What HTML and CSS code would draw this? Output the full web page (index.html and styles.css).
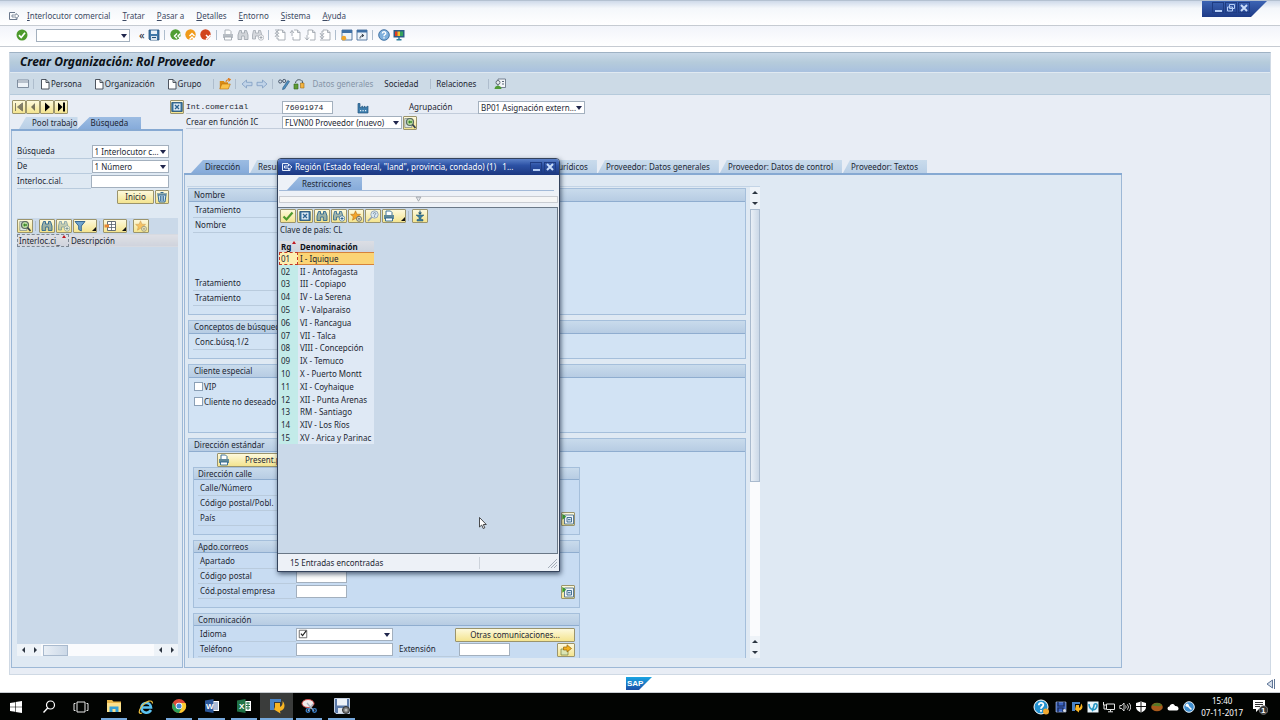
FILE: index.html
```html
<!DOCTYPE html>
<html lang="es">
<head>
  <meta charset="UTF-8">
  <title>Crear Organización: Rol Proveedor</title>
  <link rel="stylesheet" href="styles.css">
</head>
<body>
  <svg class="sprite" aria-hidden="true">
    <symbol id="i-ok" viewBox="0 0 12 12"><circle cx="6" cy="6" r="5.5" fill="#4d9a2c"/><path d="M3 6.2l2.2 2.3L9 3.8" fill="none" stroke="#fff" stroke-width="1.7"/></symbol>
    <symbol id="i-menu" viewBox="0 0 12 12"><path d="M7 2.5H1.5v7H9V7.5" fill="none" stroke="#6a788c"/><path d="M4 5h4V3.500L11 6 8 8.500V7H4z" fill="#fff" stroke="#6a788c" stroke-width=".8"/></symbol>
    <symbol id="i-save" viewBox="0 0 12 12"><path d="M1 1h10v10H2l-1-1z" fill="#3f78a8" stroke="#23527c" stroke-width=".8"/><path d="M3 1.500h6V5H3z" fill="#e8f1f8"/><path d="M3 7h6v4H3z" fill="#dbe6ee"/><path d="M4 8.500h4" stroke="#23527c"/></symbol>
    <symbol id="i-back" viewBox="0 0 12 12"><circle cx="5.500" cy="5.500" r="5.200" fill="#4f9e32"/><path d="M7 4.500L4.500 7 7 9.500M10.500 4.500L8 7l2.500 2.500" fill="none" stroke="#fff" stroke-width="1.400"/></symbol>
    <symbol id="i-exit" viewBox="0 0 12 12"><circle cx="5.500" cy="5.500" r="5.200" fill="#f09a1a"/><path d="M4.500 7L7 4.500 9.500 7M4.500 10.500L7 8l2.500 2.500" fill="none" stroke="#fff" stroke-width="1.400"/></symbol>
    <symbol id="i-cancel" viewBox="0 0 12 12"><circle cx="5.500" cy="5.500" r="5.200" fill="#d2451e"/><path d="M6 6l4.500 4.500M10.500 6L6 10.500" stroke="#fff" stroke-width="1.500"/></symbol>
    <symbol id="i-print" viewBox="0 0 12 12"><path d="M3 5V1h4.500L9 2.500V5" fill="#fff" stroke="currentColor" stroke-width=".9"/><path d="M1 5h10v4H1z" fill="currentColor" opacity=".75"/><path d="M2.500 8h7v3h-7z" fill="#fff" stroke="currentColor" stroke-width=".9"/></symbol>
    <symbol id="i-find" viewBox="0 0 12 12"><path d="M2.500 1.500h2V4H7.500V1.500h2L11 6v4.500H7.300V7H4.700v3.500H1V6z" fill="currentColor" fill-opacity=".45" stroke="currentColor" stroke-width=".9"/></symbol>
    <symbol id="i-findnext" viewBox="0 0 12 12"><path d="M1.500 1.500h2V4h3V1.500h2L9.500 5v4H6.500V7H3.500v3H.5V6z" fill="currentColor" fill-opacity=".4" stroke="currentColor" stroke-width=".8"/><circle cx="9" cy="8.500" r="2.700" fill="#fff" stroke="currentColor" stroke-width=".7"/><path d="M9 7v3M7.500 8.500h3" stroke="currentColor"/></symbol>
    <symbol id="i-first" viewBox="0 0 12 12"><path d="M4 2V1h4.500L11 3.500V11H4V9" fill="#fff" stroke="currentColor" stroke-width=".9"/><path d="M8.500 1v2.500H11M1 1h4M3 2v8M1 5l2-3 2 3M1 8l2-3 2 3" fill="none" stroke="currentColor" stroke-width=".9"/></symbol>
    <symbol id="i-prev" viewBox="0 0 12 12"><path d="M5 1h3.500L11 3.500V11H4V8" fill="#fff" stroke="currentColor" stroke-width=".9"/><path d="M8.500 1v2.500H11M3 7V1.500M1 4l2-2.500L5 4" fill="none" stroke="currentColor" stroke-width=".9"/></symbol>
    <symbol id="i-next" viewBox="0 0 12 12"><path d="M4 6V1h4.500L11 3.500V11H6" fill="#fff" stroke="currentColor" stroke-width=".9"/><path d="M8.500 1v2.500H11M3 6v5M1 8.500L3 11l2-2.500" fill="none" stroke="currentColor" stroke-width=".9"/></symbol>
    <symbol id="i-end" viewBox="0 0 12 12"><path d="M4 3V1h4.500L11 3.500V11H5" fill="#fff" stroke="currentColor" stroke-width=".9"/><path d="M8.500 1v2.500H11M1 11h4M3 2v8M1 4l2 3 2-3M1 7l2 3 2-3" fill="none" stroke="currentColor" stroke-width=".9"/></symbol>
    <symbol id="i-doc" viewBox="0 0 12 12"><path d="M2.500 1.500h4.500l3 3V11h-7.500z" fill="#fff" stroke="#3c444e" stroke-width=".9"/><path d="M7 1.500v3h3" fill="none" stroke="#3c444e" stroke-width=".9"/></symbol>
    <symbol id="i-session" viewBox="0 0 12 12"><path d="M1 1h10v10H1z" fill="#eef4fa" stroke="#4a6f9b" stroke-width=".9"/><path d="M1 1h10v3H1z" fill="#3f70a5"/><circle cx="2.800" cy="9.200" r="2.400" fill="#f0a52a"/></symbol>
    <symbol id="i-shortcut" viewBox="0 0 12 12"><path d="M1 1h10v10H1z" fill="#eef4fa" stroke="#4a6f9b" stroke-width=".9"/><path d="M1 1h10v2.500H1z" fill="#3f70a5"/><path d="M4 9.500c0-2 1-3 3.500-3M5.800 5l2 1.500-2 1.500" fill="none" stroke="#27333f" stroke-width=".9"/></symbol>
    <symbol id="i-help" viewBox="0 0 12 12"><circle cx="6" cy="6" r="5.300" fill="#7fb0dc" stroke="#36699d" stroke-width=".9"/><path d="M4.300 4.600c0-2.400 3.500-2.300 3.400-.2C7.700 5.600 6 5.600 6 7.200M6 8.300v1.300" fill="none" stroke="#fff" stroke-width="1.400"/></symbol>
    <symbol id="i-monitor" viewBox="0 0 12 12"><path d="M.5 1h11v7.500H.5z" fill="#2c5c86"/><path d="M2 2.500h2.500v4.500H2z" fill="#e03c22"/><path d="M4.500 2.500H7v4.500H4.500z" fill="#f5c32c"/><path d="M7 2.500h3v4.500H7z" fill="#34a35c"/><path d="M6 8v2M3.500 10.800h5" stroke="#2f7f9c" stroke-width="1.500"/></symbol>
    <symbol id="i-window" viewBox="0 0 12 12"><path d="M.5 2h11v7.500H.5z" fill="#eef3f8" stroke="#68778a" stroke-width=".8"/><path d="M1 4h10" stroke="#68778a" stroke-width=".8"/></symbol>
    <symbol id="i-folder" viewBox="0 0 12 12"><path d="M.8 3h4l1 1.200H9V11H.8z" fill="#d98a14"/><path d="M.8 11l2-5h8.500l-2 5z" fill="#fac24a" stroke="#b96c0c" stroke-width=".6"/><path d="M7 4c0-2 2-2.500 4-2.500M9 .3L11.300 1.500 9.500 3.500" fill="none" stroke="#e07b18" stroke-width="1.100"/></symbol>
    <symbol id="i-left" viewBox="0 0 12 12"><path d="M1 6l4.500-4v2.300H11v3.400H5.500V10z" fill="#c0d3e8" stroke="#7f9dc2" stroke-width=".8"/></symbol>
    <symbol id="i-right" viewBox="0 0 12 12"><path d="M11 6L6.500 2v2.300H1v3.400h5.500V10z" fill="#c0d3e8" stroke="#7f9dc2" stroke-width=".8"/></symbol>
    <symbol id="i-glasses" viewBox="0 0 12 12"><circle cx="2.200" cy="3.500" r="1.600" fill="none" stroke="#3d4c60" stroke-width=".9"/><circle cx="6.200" cy="3" r="1.600" fill="none" stroke="#3d4c60" stroke-width=".9"/><path d="M11.500 3.500L6.500 11l-2 .5.500-2L9.800 2.500z" fill="#4d8fc0" stroke="#28547c" stroke-width=".6"/></symbol>
    <symbol id="i-transport" viewBox="0 0 12 12"><path d="M1 6h4v5H1z" fill="#5d9b35" stroke="#33671a" stroke-width=".6"/><path d="M7.500 5h3.500v5H7.500z" fill="#f3b440" stroke="#a66c10" stroke-width=".6"/><path d="M2.500 5C3 1.500 6 1 8.500 2.500M9.500 5L9.200 2.500" fill="none" stroke="#39474f" stroke-width=".9"/></symbol>
    <symbol id="i-person" viewBox="0 0 12 12"><path d="M4 1h7.500v8.500H4z" fill="#f3f6f9" stroke="#5b6878" stroke-width=".8"/><circle cx="4" cy="4.500" r="2" fill="#e9edf0" stroke="#47525e" stroke-width=".8"/><path d="M.5 11c0-4.500 7-4.500 7 0z" fill="#4f9a36"/><path d="M8 3.500h2M8 6h2" stroke="#5b6878"/></symbol>
    <symbol id="i-xbox" viewBox="0 0 12 12"><path d="M.8 1.500h10.400v9H.8z" fill="#3c78a4" stroke="#1e4e78" stroke-width=".8"/><path d="M2.500 2.500h7v7h-7z" fill="#dfeaf3"/><path d="M4 4l4 4M8 4L4 8" stroke="#2c6491" stroke-width="1.300"/></symbol>
    <symbol id="i-factory" viewBox="0 0 12 12"><path d="M1 11V1.500h2V6l2.500-2v2L8 4v2l3-2v7z" fill="#3f7fae" stroke="#205580" stroke-width=".7"/><path d="M3 8h1.200v1.200H3zM5.500 8h1.200v1.200H5.500zM8 8h1.200v1.200H8z" fill="#e3eff8"/></symbol>
    <symbol id="i-search" viewBox="0 0 12 12"><path d="M.8 1.500h7v9h-7z" fill="#dfe7e2" stroke="#7b8682" stroke-width=".7"/><circle cx="6" cy="5" r="3.500" fill="#b8d99f" stroke="#5a6a62" stroke-width="1.200"/><path d="M8.500 7.500l3 3.500" stroke="#34424c" stroke-width="1.800"/><path d="M4 5l2-1.700v1h2v1.400H6v1z" fill="#3c8a2a"/></symbol>
    <symbol id="i-trash" viewBox="0 0 12 12"><path d="M2 4h8l-1 7H3z" fill="#cfe2f0" stroke="#2f6791"/><path d="M1 3h10M4.500 1.500h3M4.800 5v5M7.200 5v5" stroke="#2f6791" stroke-width="1.200"/></symbol>
    <symbol id="i-filter" viewBox="0 0 12 12"><path d="M1 1.500h10L7.300 6v5L4.700 9.500V6z" fill="#6fa3cc" stroke="#2a5f8d" stroke-width=".9"/></symbol>
    <symbol id="i-grid" viewBox="0 0 12 12"><path d="M3.500 1.500h8v9h-8z" fill="#fff" stroke="#55616c" stroke-width=".9"/><path d="M3.500 4.500h8M3.500 7.500h8M7.500 1.500v9" stroke="#55616c" stroke-width=".8"/><path d="M.5 4.500H5V7.500H.5z" fill="#e78934"/></symbol>
    <symbol id="i-star" viewBox="0 0 12 12"><path d="M5.500.8l1.400 3.400 3.600.2-2.800 2.300.9 3.500-3.100-1.900-3 1.900.8-3.500L.6 4.400l3.600-.2z" fill="#f4a52a" stroke="#b96f10" stroke-width=".6"/><circle cx="9" cy="8.800" r="2.500" fill="#f6f0d0" stroke="#4c565e" stroke-width=".8"/><path d="M9 7.500v2.600M7.700 8.800h2.600" stroke="#4c565e" stroke-width=".7"/></symbol>
    <symbol id="i-check" viewBox="0 0 12 12"><path d="M1.500 6.500L4.500 9.500l6-7" fill="none" stroke="#4f9a2e" stroke-width="2.200"/></symbol>
    <symbol id="i-what" viewBox="0 0 12 12"><circle cx="7.500" cy="4.500" r="3.700" fill="#d8e6f0" stroke="#8a9cad" stroke-width=".8"/><path d="M4.800 7.200L1 11" stroke="#8a9cad" stroke-width="1.600"/><path d="M6.300 3.800c0-1.700 2.500-1.600 2.400-.1-.1.800-1.200.8-1.200 1.900M7.500 6.200v1" fill="none" stroke="#6d8296" stroke-width=".9"/></symbol>
    <symbol id="i-pin" viewBox="0 0 12 12"><path d="M2 5h8L7 7.500v2H9v1.500H3V9.500h2v-2z" fill="#3c7f9f" stroke="#1f526f" stroke-width=".5"/><path d="M4 2.500h4L6 5z" fill="#1f526f"/><path d="M6 .5v3" stroke="#1f526f"/></symbol>
    <symbol id="i-detail" viewBox="0 0 12 12"><path d="M2.500 2h9v9h-9z" fill="#f2f6fa" stroke="#4a6f8e" stroke-width=".9"/><path d="M5 4.500h4.500v4.500H5z" fill="#dbe8f3" stroke="#36648b" stroke-width=".9"/><path d="M6 6.700h2.500" stroke="#36648b"/><path d="M.3.800l4 3-4 3z" fill="#3d9a2e"/></symbol>
    <symbol id="i-more" viewBox="0 0 12 12"><path d="M1 5h7v6H1z" fill="#dbe5b4" stroke="#73803f" stroke-width=".7"/><path d="M3.500 3H7V.8L11.500 4.500 7 8V6H3.500z" fill="#f0b020" stroke="#96650c" stroke-width=".7"/></symbol>
    <symbol id="i-req" viewBox="0 0 12 12"><path d="M1.500 1.500h9v9h-9z" fill="#fff" stroke="#555"/><path d="M3.500 5.500l2 2.500L10 2" fill="none" stroke="#222" stroke-width="1.400"/></symbol>
  </svg>

  <nav class="menubar">
    <svg class="ico"><use href="#i-menu"/></svg>
    <a href="#"><u>I</u>nterlocutor comercial</a>
    <a href="#"><u>T</u>ratar</a>
    <a href="#"><u>P</u>asar a</a>
    <a href="#"><u>D</u>etalles</a>
    <a href="#"><u>E</u>ntorno</a>
    <a href="#"><u>S</u>istema</a>
    <a href="#"><u>A</u>yuda</a>
  </nav>

  <div class="toolbar">
    <button class="tool" aria-label="Continuar"><svg class="ico"><use href="#i-ok"/></svg></button>
    <span class="combo command"><select aria-label="Comando"><option></option></select></span>
    <span class="chevrons">«</span>
    <button class="tool" aria-label="Grabar"><svg class="ico"><use href="#i-save"/></svg></button>
    <i class="sep"></i>
    <button class="tool" aria-label="Atrás"><svg class="ico"><use href="#i-back"/></svg></button>
    <button class="tool" aria-label="Finalizar"><svg class="ico"><use href="#i-exit"/></svg></button>
    <button class="tool" aria-label="Cancelar"><svg class="ico"><use href="#i-cancel"/></svg></button>
    <i class="sep"></i>
    <button class="tool off" aria-label="Imprimir"><svg class="ico"><use href="#i-print"/></svg></button>
    <button class="tool off" aria-label="Buscar"><svg class="ico"><use href="#i-find"/></svg></button>
    <button class="tool off" aria-label="Continuar búsqueda"><svg class="ico"><use href="#i-findnext"/></svg></button>
    <i class="sep"></i>
    <button class="tool off" aria-label="Primera página"><svg class="ico"><use href="#i-first"/></svg></button>
    <button class="tool off" aria-label="Página anterior"><svg class="ico"><use href="#i-prev"/></svg></button>
    <button class="tool off" aria-label="Página siguiente"><svg class="ico"><use href="#i-next"/></svg></button>
    <button class="tool off" aria-label="Última página"><svg class="ico"><use href="#i-end"/></svg></button>
    <i class="sep"></i>
    <button class="tool" aria-label="Crear modo"><svg class="ico"><use href="#i-session"/></svg></button>
    <button class="tool" aria-label="Crear enlace"><svg class="ico"><use href="#i-shortcut"/></svg></button>
    <i class="sep"></i>
    <button class="tool" aria-label="Ayuda"><svg class="ico"><use href="#i-help"/></svg></button>
    <button class="tool" aria-label="Ajustar layout"><svg class="ico"><use href="#i-monitor"/></svg></button>
  </div>

  <main class="screen">
    <h1>Crear Organización: Rol Proveedor</h1>
    <div class="appbar">
      <button class="tool" aria-label="Cabecera"><svg class="ico"><use href="#i-window"/></svg></button>
      <i class="sep"></i>
      <button class="act"><svg class="ico"><use href="#i-doc"/></svg>Persona</button>
      <button class="act"><svg class="ico"><use href="#i-doc"/></svg>Organización</button>
      <button class="act"><svg class="ico"><use href="#i-doc"/></svg>Grupo</button>
      <i class="sep"></i>
      <button class="tool" aria-label="Abrir"><svg class="ico"><use href="#i-folder"/></svg></button>
      <i class="sep"></i>
      <button class="tool" aria-label="Anterior"><svg class="ico"><use href="#i-left"/></svg></button>
      <button class="tool" aria-label="Siguiente"><svg class="ico"><use href="#i-right"/></svg></button>
      <i class="sep"></i>
      <button class="tool" aria-label="Visualizar"><svg class="ico"><use href="#i-glasses"/></svg></button>
      <button class="tool" aria-label="Verificar"><svg class="ico"><use href="#i-transport"/></svg></button>
      <button class="act" disabled>Datos generales</button>
      <button class="act">Sociedad</button>
      <i class="sep"></i>
      <button class="act">Relaciones</button>
      <i class="sep"></i>
      <button class="tool" aria-label="Interlocutor"><svg class="ico"><use href="#i-person"/></svg></button>
    </div>

    <div class="content">
      <section class="locator">
        <div class="nav-row">
          <button class="btn sq off" aria-label="Primero"><svg class="ico"><path d="M2.500 2v8M9.500 2v8L4.500 6z" fill="#333" stroke="#333"/></svg></button>
          <button class="btn sq off" aria-label="Anterior"><svg class="ico"><path d="M8 2v8L4 6z" fill="#222"/></svg></button>
          <button class="btn sq" aria-label="Siguiente"><svg class="ico"><path d="M4 1.500v9L9 6z"/></svg></button>
          <button class="btn sq" aria-label="Último"><svg class="ico"><path d="M3 1.500v9L7.500 6zM8 1.500h2v9H8z"/></svg></button>
          <button class="btn sq last" aria-label="Cerrar localizador"><svg class="ico"><use href="#i-xbox"/></svg></button>
        </div>
        <div class="tabs">
          <a class="tab" href="#">Pool trabajo</a>
          <a class="tab active" href="#">Búsqueda</a>
        </div>
        <div class="pane">
          <form class="search">
            <div class="row">
              <label for="buscar">Búsqueda</label>
              <span class="combo"><select id="buscar"><option>1 Interlocutor c...</option></select></span>
            </div>
            <div class="row">
              <label for="de">De</label>
              <span class="combo"><select id="de"><option>1 Número</option></select></span>
            </div>
            <div class="row">
              <label for="interloc">Interloc.cial.</label>
              <input type="text" id="interloc">
            </div>
            <div class="row end">
              <button class="btn start" type="button">Inicio</button>
              <button class="btn sq" type="button" aria-label="Borrar"><svg class="ico"><use href="#i-trash"/></svg></button>
            </div>
          </form>
          <div class="results">
            <div class="results-bar">
              <button class="btn" aria-label="Detalle"><svg class="ico"><use href="#i-search"/></svg></button>
              <i class="sep"></i>
              <button class="btn blue" aria-label="Buscar"><svg class="ico"><use href="#i-find"/></svg></button>
              <button class="btn off blue" aria-label="Continuar búsqueda"><svg class="ico"><use href="#i-findnext"/></svg></button>
              <button class="btn drop" aria-label="Filtro"><svg class="ico"><use href="#i-filter"/></svg></button>
              <i class="sep"></i>
              <button class="btn drop" aria-label="Layout"><svg class="ico"><use href="#i-grid"/></svg></button>
              <i class="sep"></i>
              <button class="btn off" aria-label="Favoritos"><svg class="ico"><use href="#i-star"/></svg></button>
            </div>
            <table class="results-table">
              <thead><tr><th class="sorted">Interloc.ci_</th><th>Descripción</th></tr></thead>
            </table>
            <div class="hscroll">
              <b class="ar l"></b><b class="ar r"></b><span class="thumb"></span><b class="ar l"></b><b class="ar r"></b>
            </div>
          </div>
        </div>
      </section>

      <section class="detail">
        <div class="head-row">
          <label class="mono" for="ic">Int.comercial</label>
          <input class="mono" type="text" id="ic" value="76091974">
          <svg class="ico factory"><use href="#i-factory"/></svg>
          <label for="agr" class="agr">Agrupación</label>
          <span class="combo agr-sel"><select id="agr"><option>BP01 Asignación extern...</option></select></span>
        </div>
        <div class="head-row">
          <label for="rol">Crear en función IC</label>
          <span class="combo rol-sel"><select id="rol"><option>FLVN00 Proveedor (nuevo)</option></select></span>
          <button class="btn sq" aria-label="Detalle función"><svg class="ico"><use href="#i-search"/></svg></button>
        </div>
        <div class="tabs">
          <a class="tab active" href="#">Dirección</a>
          <a class="tab summary" href="#">Resumen</a>
          <a class="tab" href="#">Datos jurídicos</a>
          <a class="tab" href="#">Proveedor: Datos generales</a>
          <a class="tab" href="#">Proveedor: Datos de control</a>
          <a class="tab" href="#">Proveedor: Textos</a>
        </div>
        <div class="pane">
          <div class="scroller">
            <form class="groups">
              <fieldset>
                <legend>Nombre</legend>
                <div class="row"><span>Tratamiento</span></div>
                <div class="row"><span>Nombre</span></div>
                <div class="blank"></div>
                <div class="row"><span>Tratamiento</span></div>
                <div class="row"><span>Tratamiento</span></div>
              </fieldset>
              <fieldset>
                <legend>Conceptos de búsqueda</legend>
                <div class="row"><span>Conc.búsq.1/2</span></div>
              </fieldset>
              <fieldset class="special">
                <legend>Cliente especial</legend>
                <label class="check"><input type="checkbox">VIP</label>
                <label class="check"><input type="checkbox">Cliente no deseado</label>
              </fieldset>
              <fieldset class="address">
                <legend>Dirección estándar</legend>
                <button class="btn preview" type="button"><svg class="ico blue"><use href="#i-print"/></svg>Present.prel.</button>
                <fieldset class="sub">
                  <legend>Dirección calle</legend>
                  <div class="row"><span>Calle/Número</span></div>
                  <div class="row"><span>Código postal/Pobl.</span></div>
                  <div class="row"><span>País</span><button class="btn sq last" type="button" aria-label="Más campos"><svg class="ico"><use href="#i-detail"/></svg></button></div>
                </fieldset>
                <fieldset class="sub">
                  <legend>Apdo.correos</legend>
                  <div class="row"><label for="apdo">Apartado</label><input type="text" id="apdo" class="short"></div>
                  <div class="row"><label for="cp">Código postal</label><input type="text" id="cp" class="short"></div>
                  <div class="row"><label for="cpe">Cód.postal empresa</label><input type="text" id="cpe" class="short"><button class="btn sq last" type="button" aria-label="Más campos"><svg class="ico"><use href="#i-detail"/></svg></button></div>
                </fieldset>
                <fieldset class="sub">
                  <legend>Comunicación</legend>
                  <div class="row">
                    <label for="idioma">Idioma</label>
                    <span class="combo required"><select id="idioma"><option></option></select><svg class="ico"><use href="#i-req"/></svg></span>
                    <button class="btn other last" type="button">Otras comunicaciones...</button>
                  </div>
                  <div class="row">
                    <label for="tel">Teléfono</label><input type="text" id="tel" class="long">
                    <label for="ext" class="ext">Extensión</label><input type="text" id="ext" class="short">
                    <button class="btn more last" type="button" aria-label="Más teléfonos"><svg class="ico"><use href="#i-more"/></svg></button>
                  </div>
                </fieldset>
              </fieldset>
            </form>
            <div class="vscroll">
              <b class="ar u"></b><b class="ar d"></b><span class="thumb"></span><b class="ar u"></b><b class="ar d"></b>
            </div>
          </div>
        </div>
      </section>
    </div>
  </main>

  <footer class="statusbar">
    <svg class="sap" viewBox="0 0 26 13" role="img" aria-label="SAP">
      <defs><linearGradient id="g-sap" x2="0" y2="1"><stop stop-color="#19a4e2"/><stop offset="1" stop-color="#1a4fa8"/></linearGradient></defs>
      <path d="M0 0h26L13 13H0z" fill="url(#g-sap)"/>
      <text x="1" y="9">SAP</text>
    </svg>
    <svg class="ico expand"><path d="M9.500 2v8L4 6zM11.500 1v10" fill="#d5deea" stroke="#5e7596"/></svg>
  </footer>

  <footer class="taskbar">
    <div class="apps">
      <a href="#" aria-label="Inicio"><svg viewBox="0 0 16 16"><path d="M2 4l5-.8v4.500H2zM7.600 3.100L14 2v5.700H7.600zM2 8.300h5v4.500L2 12zM7.600 8.300H14V14l-6.400-1z" fill="#fff"/></svg></a>
      <a href="#" aria-label="Buscar"><svg viewBox="0 0 16 16"><circle cx="9.500" cy="6" r="4" fill="none" stroke="#fff" stroke-width="1.200"/><path d="M6.700 9L2.500 13.500" stroke="#fff" stroke-width="1.400"/></svg></a>
      <a href="#" aria-label="Vista de tareas"><svg viewBox="0 0 16 16"><path d="M4 3h8v10H4zM2.500 4.500h-1.500v7h1.500M13.500 4.500H15v7h-1.500" fill="none" stroke="#e8e8e8"/></svg></a>
      <a href="#" class="run" aria-label="Explorador"><svg viewBox="0 0 16 16"><path d="M1 2h5l1.500 1.500H15V14H1z" fill="#e9b84c"/><path d="M1 5h14v9H1z" fill="#fbe08c"/><path d="M3.500 14V8.500h9V14h-3v-3h-3v3z" fill="#35a0d8"/></svg></a>
      <a href="#" aria-label="Internet Explorer"><svg viewBox="0 0 16 16"><path d="M13 11c-3 4.500-9.500 3-9.500-2.500S12.500 2 13 8.500H4" fill="none" stroke="#5cc4f2" stroke-width="2.600"/><path d="M14.500 4.500C14.500 0 8 2 4 7c-4 4.800-3.500 8.500 0 7" fill="none" stroke="#f2c440" stroke-width="1.200"/></svg></a>
      <a href="#" class="run" aria-label="Chrome"><svg viewBox="0 0 16 16"><circle cx="8" cy="8" r="7" fill="#dd4b39"/><path d="M2 4.500A7 7 0 0 0 8 15l3-5.500H5z" fill="#2da25a"/><path d="M8 15A7 7 0 0 0 14.500 5H8l3 4.500z" fill="#fbcb2e"/><circle cx="8" cy="8" r="3.300" fill="#fff"/><circle cx="8" cy="8" r="2.500" fill="#4285d6"/></svg></a>
      <a href="#" class="run" aria-label="Word"><svg viewBox="0 0 16 16"><path d="M8 3h7v10H8z" fill="#fff"/><path d="M10 5h4M10 7h4M10 9h4M10 11h4" stroke="#2b579a" stroke-width=".8"/><path d="M1 2.500L9.500 1v14L1 13.500z" fill="#2b579a"/><text x="2" y="11">W</text></svg></a>
      <a href="#" class="run" aria-label="Excel"><svg viewBox="0 0 16 16"><path d="M8 3h7v10H8z" fill="#fff"/><path d="M10 5h4M10 7.500h4M10 10h4M12 4v8" stroke="#217346"/><path d="M1 2.500L9.500 1v14L1 13.500z" fill="#217346"/><text x="3" y="11">X</text></svg></a>
      <a href="#" class="run current" aria-label="SAP Logon"><svg viewBox="0 0 16 16"><path d="M1 1h11v3H5v8H1z" fill="#4a83c4"/><path d="M6 5h5v4c2-1 3-3 2.500-6C16.500 6 16.500 12 11 13l.5 2.500L5 11.500 6 9z" fill="#f9b522"/></svg></a>
      <a href="#" class="run" aria-label="Recortes"><svg viewBox="0 0 16 16"><ellipse cx="7" cy="5.500" rx="6" ry="4" fill="#f0eaea" stroke="#d34a4a"/><path d="M6 5l7 8M12 6l-5 7" stroke="#a8b4c0" stroke-width="1.300"/><circle cx="7" cy="12.500" r="1.800" fill="none" stroke="#3b7fc8" stroke-width="1.300"/><circle cx="13.500" cy="12.500" r="1.800" fill="none" stroke="#3b7fc8" stroke-width="1.300"/></svg></a>
      <a href="#" class="run" aria-label="Grabadora"><svg viewBox="0 0 16 16"><path d="M.5.500h15v15H2l-1.500-1.500z" fill="#5b79a8" stroke="#c3cfe0"/><path d="M3 1h10v6.500H3z" fill="#eef2f8"/><path d="M4 10h6v5H4z" fill="#dfe5ee"/><circle cx="12" cy="12" r="3.500" fill="#777" stroke="#333"/><circle cx="12" cy="12" r="1.500" fill="#bbb"/></svg></a>
    </div>
    <div class="tray">
      <svg class="big" viewBox="0 0 16 16"><circle cx="8" cy="8" r="7" fill="#2391cf" stroke="#fff"/><path d="M5.800 6.200c0-3.200 4.700-3 4.500-.2C10.200 7.800 8 7.700 8 9.800M8 11v1.800" fill="none" stroke="#fff" stroke-width="1.800"/><circle cx="13" cy="12.500" r="3" fill="#f0a830"/></svg>
      <svg viewBox="0 0 12 12"><path d="M1 1h10v10H1z" fill="#3a62c0" stroke="#a7b7d8" stroke-width=".7"/><path d="M3 1v4h6V1M3 11V7h5v4" fill="none" stroke="#16264f" stroke-width="1.200"/><circle cx="9.500" cy="9.500" r="1.500" fill="#ddd"/></svg>
      <svg viewBox="0 0 12 12"><path d="M1 1h8v2H4v7H1z" fill="#4a83c4"/><path d="M5 4h3v3c1.500-1 2-2 2-4.500 3 3 1 7-2 7v2L4 8.500z" fill="#f9b522"/></svg>
      <svg viewBox="0 0 12 12"><path d="M.5.500h11v11H.5z" fill="#e9f5fb"/><path d="M2 3c0 6 7 8 8 2 .5-3-3-3-3-.5S4 9 6 10" fill="none" stroke="#2596c4" stroke-width="1.600"/></svg>
      <svg viewBox="0 0 12 12"><path d="M3.500 3h8v5.500h-8zM7.500 8.500v2M5 10.800h5M.5 1v3h3M1 4v4h2" fill="none" stroke="#e8e8e8"/></svg>
      <svg viewBox="0 0 12 12"><path d="M.8 4.500h2L5 2v8L2.800 7.500h-2zM6.500 4.500q1.500 1.500 0 3M8.300 3.300q2.500 2.700 0 5.400M10 2q3.500 4 0 8" fill="none" stroke="#e8e8e8" stroke-width=".9"/></svg>
      <svg viewBox="0 0 12 12"><path d="M6 .5L11 2v4c0 3-2.500 4.500-5 5.500C3.500 10.500 1 9 1 6V2z" fill="#fff"/><path d="M6 1v10M1 5.500h10" stroke="#111"/></svg>
      <svg viewBox="0 0 12 12"><ellipse cx="6" cy="6" rx="5.800" ry="4.300" fill="#a85a1c"/><path d="M.5 5C3 1.500 8 1 11 4 8 7 4 4 .5 5z" fill="#557a28"/></svg>
      <svg viewBox="0 0 12 12"><path d="M2.500 9.500a2 2 0 0 1 0-4C3 2.500 7 2 8 5c4-.5 4.500 4 2 4.500z" fill="#fff"/></svg>
      <svg viewBox="0 0 12 12"><circle cx="6" cy="6" r="5.300" fill="#3f8fd0" stroke="#e8f2fa"/><path d="M4 4l4.500 4.500" stroke="#fff" stroke-width="1.500"/><circle cx="4.200" cy="4.200" r="1.600" fill="#fff"/></svg>
      <time>15:40<br>07-11-2017</time>
      <svg class="big note" viewBox="0 0 16 16"><path d="M1 1h12v9H7l-3 3v-3H1z" fill="#fff"/><path d="M3 3.500h8M3 5.500h8M3 7.500h5" stroke="#333"/><circle cx="11.500" cy="11" r="4.300" fill="#333" stroke="#999" stroke-width=".7"/><text x="9" y="14">1</text></svg>
    </div>
  </footer>

  <div class="win-controls">
    <button aria-label="Minimizar"><svg class="ico"><path d="M3 9h7" stroke="#b5cdf5" stroke-width="2"/></svg></button>
    <button aria-label="Restaurar"><svg class="ico"><path d="M4.500 2.500h5v4h-5zM2.500 5h5v4h-5z" fill="#2c4f9c" stroke="#b5cdf5"/></svg></button>
    <button aria-label="Cerrar"><svg class="ico"><path d="M3 3l6 6M9 3L3 9" stroke="#c8dbf8" stroke-width="2"/></svg></button>
  </div>

  <div class="dialog" role="dialog" aria-labelledby="dlg-title">
    <header>
      <svg class="ico" viewBox="0 0 12 12"><path d="M7 2.500H1.500v7H9V8M3.500 5h4V3l3.500 3-3.500 2.500V7h-4z" fill="none" stroke="#e6eefb"/></svg>
      <h2 id="dlg-title">Región (Estado federal, "land", provincia, condado) (1) &nbsp; 1...</h2>
      <button aria-label="Minimizar"><svg class="ico"><path d="M3 9h7" stroke="#b5cdf5" stroke-width="2"/></svg></button>
      <button aria-label="Cerrar"><svg class="ico"><path d="M3 3l6 6M9 3L3 9" stroke="#c8dbf8" stroke-width="2"/></svg></button>
    </header>
    <div class="tabs"><a class="tab active" href="#">Restricciones</a></div>
    <div class="splitter"><svg class="ico" viewBox="0 0 12 12"><path d="M2 2h8L6 9z" fill="#e4e6ea" stroke="#808791"/></svg></div>
    <div class="dialog-body">
      <div class="dialog-bar">
        <button class="btn" aria-label="Tomar"><svg class="ico"><use href="#i-check"/></svg></button>
        <button class="btn" aria-label="Cancelar"><svg class="ico"><use href="#i-xbox"/></svg></button>
        <button class="btn blue" aria-label="Buscar"><svg class="ico"><use href="#i-find"/></svg></button>
        <button class="btn blue" aria-label="Continuar búsqueda"><svg class="ico"><use href="#i-findnext"/></svg></button>
        <button class="btn" aria-label="Favoritos"><svg class="ico"><use href="#i-star"/></svg></button>
        <button class="btn" aria-label="Ayuda"><svg class="ico"><use href="#i-what"/></svg></button>
        <button class="btn drop blue" aria-label="Imprimir"><svg class="ico"><use href="#i-print"/></svg></button>
        <i class="sep"></i>
        <button class="btn" aria-label="Retener lista"><svg class="ico"><use href="#i-pin"/></svg></button>
      </div>
      <p>Clave de país: CL</p>
      <table class="regions">
        <thead><tr><th class="sorted">Rg</th><th>Denominación</th></tr></thead>
        <tbody>
          <tr class="selected"><td>01</td><td>I - Iquique</td></tr>
          <tr><td>02</td><td>II - Antofagasta</td></tr>
          <tr><td>03</td><td>III - Copiapo</td></tr>
          <tr><td>04</td><td>IV - La Serena</td></tr>
          <tr><td>05</td><td>V - Valparaiso</td></tr>
          <tr><td>06</td><td>VI - Rancagua</td></tr>
          <tr><td>07</td><td>VII - Talca</td></tr>
          <tr><td>08</td><td>VIII - Concepción</td></tr>
          <tr><td>09</td><td>IX - Temuco</td></tr>
          <tr><td>10</td><td>X - Puerto Montt</td></tr>
          <tr><td>11</td><td>XI - Coyhaique</td></tr>
          <tr><td>12</td><td>XII - Punta Arenas</td></tr>
          <tr><td>13</td><td>RM - Santiago</td></tr>
          <tr><td>14</td><td>XIV - Los Ríos</td></tr>
          <tr><td>15</td><td>XV - Arica y Parinac</td></tr>
        </tbody>
      </table>
    </div>
    <footer><span>15 Entradas encontradas</span><svg class="ico" viewBox="0 0 12 12"><path d="M2 11l9-9M5 11l6-6M8 11l3-3" stroke="#a4adb8"/></svg></footer>
  </div>

  <svg class="pointer" viewBox="0 0 8 12"><path d="M.5.500v9.500l2.200-2 1.500 3.500 1.600-.7L4.300 7.500h3z" fill="#fff" stroke="#222" stroke-width=".8"/></svg>
</body>
</html>
```

FILE: styles.css
```css
* {
  box-sizing: border-box;
}

body {
  font: 8px/12px "Noto Sans", sans-serif;
  margin: 0;
  height: 100vh;
  display: flex;
  flex-direction: column;
  position: relative;
  overflow: hidden;
  color: #1d2733;
  background: #fff;
  border-top: 1px solid #b4c1d1;
}

a {
  color: inherit;
  text-decoration: none;
}

button, input, select {
  font: inherit;
  color: inherit;
  margin: 0;
  padding: 0;
}

h1, h2, p {
  margin: 0;
}

.sprite {
  position: absolute;
  width: 0;
  height: 0;
}

.ico {
  width: 12px;
  height: 12px;
  flex: none;
  display: block;
}

.mono {
  font-family: "Liberation Mono", monospace;
}

.last {
  margin-left: auto;
}

.sep {
  width: 1px;
  height: 10px;
  margin: 0 2px 0 1px;
  background: #aebdcd;
}

/* top bars */
.menubar {
  height: 25px;
  padding: 5px 8px 0;
  display: flex;
  align-items: center;
  gap: 12px;
  color: #3b4963;
  background: linear-gradient(#cfdaea, #f4f7fb 30%, #fff);
  border-bottom: 1px solid #c6cbd2;
}

.menubar .ico {
  margin-right: -5px;
}

.toolbar {
  height: 21px;
  padding: 0 0 2px 16px;
  display: flex;
  align-items: center;
  gap: 3px;
  background: linear-gradient(#f2f4fa, #fff);
  border-bottom: 1px solid #c6cbd2;
}

.tool, .act {
  border: 0;
  background: none;
  display: flex;
  align-items: center;
}

.tool.off {
  color: #a2a8b0;
}

.command {
  width: 94px;
  margin: 0 6px 0 5px;
}

.chevrons {
  font-size: 11px;
}

.combo {
  position: relative;
  display: flex;
}

.combo select {
  appearance: none;
  width: 100%;
}

.combo::after {
  content: "";
  position: absolute;
  right: 3px;
  top: 5px;
  border: 3px solid transparent;
  border-top: 4px solid #20264c;
  border-bottom: 0;
  pointer-events: none;
}

select, input[type="text"] {
  height: 13px;
  padding: 0 2px;
  line-height: 11px;
  background: #fff;
  border: 1px solid #a3b0be;
  border-radius: 0;
}

.screen {
  flex: 1;
  min-height: 0;
  margin: 5px 9px 0;
  display: flex;
  flex-direction: column;
  background: #e8edf5;
  border: 1px solid #cfd9e4;
  border-top-color: #9fb2c4;
}

h1 {
  height: 19px;
  padding-left: 10px;
  font: italic bold 12px/17px "Noto Sans", sans-serif;
  color: #0c1118;
  background: linear-gradient(#c9d9e8, #b5cbdb 50%, #a9c1df);
}

.appbar {
  height: 23px;
  padding-left: 7px;
  display: flex;
  align-items: center;
  gap: 3px;
  background: #ccdae6;
  border-top: 1px solid #e0e9f1;
  border-bottom: 1px solid #b5cadb;
}

.act {
  padding-right: 8px;
}

.act:disabled {
  margin-left: 4px;
  color: #8494a6;
}

.content {
  flex: 1;
  min-height: 0;
  padding: 4px 148px 6px 1px;
  display: grid;
  grid-template-columns: 172px minmax(0, 1fr);
  gap: 1px;
}

.locator, .detail {
  display: flex;
  flex-direction: column;
  min-height: 0;
}

.pane {
  flex: 1;
  min-height: 0;
  display: flex;
  flex-direction: column;
  background: #dfe9f3;
  border: 1px solid #9db8d6;
  border-top: 0;
}

/* yellow buttons */
.btn {
  height: 14px;
  min-width: 16px;
  display: flex;
  align-items: center;
  justify-content: center;
  background: linear-gradient(#fdf9dc, #f4e48f);
  border: 1px solid #9b946c;
  border-radius: 1px;
}

.btn.sq {
  width: 14px;
  min-width: 14px;
}

.btn.off .ico {
  opacity: .6;
}

.blue {
  color: #2b6590;
}

.btn.drop {
  width: 24px;
  justify-content: flex-start;
}

.btn.drop::after {
  content: "";
  margin: 6px 0 0 6px;
  border: 2px solid #111;
  border-top-color: transparent;
  border-left-color: transparent;
}

.nav-row {
  display: flex;
  height: 18px;
  padding: 1px 0 0 1px;
}

.nav-row .last {
  margin-right: -1px;
}

/* tabs */
.tabs {
  height: 14px;
  display: flex;
  align-items: flex-end;
  border-bottom: 2px solid #86a9d2;
}

.tab {
  height: 12px;
  line-height: 12px;
  padding: 0 9px 0 8px;
  white-space: nowrap;
  background: linear-gradient(#c9dbec, #b9cfe6);
  clip-path: polygon(7px 0, 100% 0, 100% 100%, 0 100%);
  margin-right: 1px;
}

.tab.active {
  background: linear-gradient(#9cbce2, #86abda);
  padding-left: 14px;
  clip-path: polygon(12px 0, 100% 0, 100% 100%, 0 100%);
}

.locator .tabs {
  padding-left: 8px;
}

.locator .tab {
  padding-left: 13px;
  padding-right: 0;
  margin: 0;
}

.locator .tab.active {
  padding-right: 13px;
}

.detail {
  padding-top: 1px;
}

.detail .tabs {
  margin-top: 29px;
  height: 16px;
  padding-left: 7px;
}

.detail .tab {
  height: 13px;
  line-height: 14px;
}

.detail .summary {
  width: 273px;
}

/* left side */
.search {
  padding: 13px 13px 0 5px;
}

.row {
  height: 15px;
  display: flex;
  align-items: center;
}

.row label, .row span:first-child {
  line-height: 14px;
  border-bottom: 1px solid #b9cbdd;
}

.search label {
  width: 75px;
}

.search .combo, .search input {
  width: 78px;
}

.end {
  justify-content: flex-end;
  gap: 1px;
}

.start {
  width: 37px;
}

.results {
  flex: 1;
  margin: 14px 4px 11px 5px;
  display: flex;
  flex-direction: column;
  background: #cad9e9;
}

.results-bar, .dialog-bar {
  height: 16px;
  display: flex;
  align-items: center;
  gap: 1px;
}

.results-table {
  width: 100%;
  border-collapse: collapse;
  background: linear-gradient(#dfe0e6, #cfd3dc);
}

.results-table th {
  height: 12px;
  padding: 0 2px;
  font-weight: normal;
  line-height: 10px;
  text-align: left;
}

.results-table .sorted {
  width: 51px;
  padding: 0 1px;
  border: 1px dashed #7d8894;
}

.sorted {
  position: relative;
}

.sorted::after {
  content: "";
  position: absolute;
  right: 2px;
  top: 0;
  border: 2px solid transparent;
  border-top: 0;
  border-bottom: 3px solid #c01822;
}

.hscroll {
  height: 12px;
  margin-top: auto;
  display: flex;
  background: #fafbfd;
}

.ar {
  width: 12px;
  height: 12px;
  display: grid;
  place-content: center;
  background: #eef3f8;
}

.ar::before {
  content: "";
  border: 3px solid transparent;
}

.l::before {
  border-right-color: #2c3540;
  border-left: 0;
}

.r::before {
  border-left-color: #2c3540;
  border-right: 0;
}

.u::before {
  border-bottom-color: #2c3540;
  border-top: 0;
}

.d::before {
  border-top-color: #2c3540;
  border-bottom: 0;
}

.thumb {
  background: linear-gradient(90deg, #e9eff6, #cbd8e7);
  border: 1px solid #a9bace;
}

.hscroll .thumb {
  width: 25px;
  margin: 1px auto 0 2px;
}

/* right side */
.head-row {
  height: 15px;
  display: flex;
  align-items: center;
  padding-left: 2px;
}

.head-row > label:first-child {
  width: 96px;
  border-bottom: 1px solid #c3cddb;
}

#ic {
  width: 51px;
}

.factory {
  margin: 0 40px 0 24px;
}

.agr {
  width: 69px;
  border-bottom: 1px solid #c3cddb;
}

.agr-sel {
  width: 107px;
}

.rol-sel {
  width: 120px;
  margin-right: 1px;
}

.scroller {
  flex: 1;
  min-height: 0;
  margin: 11px 0 9px 2px;
  width: 573px;
  display: flex;
  overflow: hidden;
  border-top: 1px solid #c3d4e6;
}

.groups {
  flex: 1;
  padding: 1px 4px 0 1px;
  display: flex;
  flex-direction: column;
  gap: 5px;
}

fieldset {
  min-width: 0;
  margin: 0;
  padding: 0 0 8px;
  background: #d2e3f4;
  border: 1px solid #a5bfdb;
  border-top: 0;
}

legend {
  float: left;
  width: 100%;
  height: 14px;
  margin-bottom: 1px;
  padding: 0 5px;
  line-height: 11px;
  background: linear-gradient(#c9dbec, #b7cce3);
  border-top: 1px solid #a5bfdb;
  border-bottom: 1px solid #8fadcf;
}

legend ~ * {
  clear: both;
}

.groups .row {
  padding-left: 4px;
}

.row span:first-child {
  width: 100px;
  padding-left: 2px;
}

.blank {
  height: 43px;
}

.check {
  height: 15px;
  padding-left: 5px;
  display: flex;
  align-items: center;
  gap: 1px;
}

.check input {
  appearance: none;
  width: 9px;
  height: 9px;
  background: #fff;
  border: 1px solid #8ba0b6;
}

.special {
  padding-bottom: 23px;
}

.address {
  padding: 0;
}

.preview {
  width: 120px;
  margin-left: 28px;
  justify-content: flex-start;
  gap: 15px;
}

.sub {
  width: 387px;
  background: #c8dcf2;
  margin: 0 0 5px 4px;
}

.sub legend {
  height: 13px;
  line-height: 11px;
  padding: 0 4px;
}

.sub .row label:first-child {
  width: 98px;
  padding-left: 2px;
}

.sub .row {
  padding-right: 4px;
}

.short {
  width: 51px;
}

.long, .required {
  width: 97px;
}

.required .ico {
  position: absolute;
  left: 2px;
  top: 1px;
  width: 10px;
  height: 10px;
}

.ext {
  width: 60px;
  margin-left: 6px;
}

.other {
  width: 120px;
}

.more {
  width: 18px;
}

.vscroll {
  width: 10px;
  display: flex;
  flex-direction: column;
  background: #fafbfd;
}

.vscroll .ar {
  width: 10px;
  height: 11px;
}

.vscroll .thumb {
  height: 273px;
  margin-bottom: auto;
}

/* bottom bars */
.statusbar {
  height: 18px;
  display: flex;
  align-items: center;
  padding: 0 5px 0 626px;
  border-bottom: 1px solid #c9cdd2;
}

.sap {
  width: 26px;
  height: 13px;
}

.sap text {
  font: bold 8px "Liberation Sans", sans-serif;
  fill: #fff;
}

.expand {
  margin-left: auto;
}

.taskbar {
  height: 27px;
  display: flex;
  justify-content: space-between;
  color: #fff;
  background: #020402;
}

.apps {
  width: 358px;
  display: grid;
  grid-template-columns: repeat(11, 1fr);
}

.apps a {
  display: grid;
  place-items: center;
  margin: 0 3px;
}

.apps svg, .big {
  width: 16px;
  height: 16px;
}

.apps text, .note text {
  font: bold 8px "Liberation Sans", sans-serif;
  fill: #fff;
}

.run {
  border-bottom: 2px solid #76a9dc;
}

.apps .current {
  margin: 0;
  background: #3a3c3b;
}

.tray {
  display: flex;
  align-items: center;
  gap: 4px;
  padding-right: 12px;
}

.tray svg {
  width: 12px;
  height: 12px;
}

.tray .big {
  width: 16px;
  height: 16px;
  margin-right: 2px;
}

.tray .note {
  margin: 0;
}

.tray time {
  margin: 0 5px 0 2px;
  text-align: center;
}

/* floating windows */
.win-controls {
  position: absolute;
  right: 13px;
  top: 0;
  width: 65px;
  height: 16px;
  padding: 1px 0 0 10px;
  display: flex;
  gap: 1px;
  background: linear-gradient(#3c64b4, #1d3a86);
  clip-path: polygon(0 0, 100% 0, 49px 100%, 0 100%);
}

.win-controls button, .dialog header button {
  width: 12px;
  height: 11px;
  display: grid;
  place-content: center;
  background: none;
  border: 1px solid #1f3c82;
}

.win-controls .ico, .dialog header button .ico {
  width: 12px;
  height: 12px;
}

.dialog {
  position: absolute;
  left: 277px;
  top: 157px;
  width: 283px;
  height: 414px;
  display: flex;
  flex-direction: column;
  background: #edf1f7;
  border: 1px solid #34435c;
  border-radius: 4px 4px 0 0;
  box-shadow: 1px 2px 5px rgba(20, 35, 60, .7);
}

.dialog header {
  height: 16px;
  padding: 0 3px;
  display: flex;
  align-items: center;
  gap: 2px;
  color: #fff;
  background: linear-gradient(#5a80c8, #2c51a4 40%, #1b3780);
  border-radius: 3px 3px 0 0;
}

.dialog h2 {
  flex: 1;
  font-size: 8px;
  font-weight: normal;
}

.dialog .tabs {
  margin: 2px 5px 0 1px;
  height: 14px;
  padding-left: 8px;
  border-bottom: 1px solid #a3bad8;
}

.dialog .tab {
  height: 13px;
  line-height: 13px;
  padding: 0 11px 0 15px;
}

.splitter {
  height: 7px;
  margin: 5px 1px 4px;
  display: flex;
  justify-content: center;
  align-items: center;
  background: #f6f6f6;
  border: 1px solid #c9ccd2;
}

.splitter .ico {
  width: 7px;
  height: 7px;
}

.dialog-body {
  flex: 1;
  background: #cad9e9;
  border: 1px solid #6a7887;
  border-left: 0;
  margin-right: 1px;
}

.dialog-bar {
  height: 16px;
  padding-left: 2px;
}

.dialog-body p {
  padding-left: 2px;
  height: 17px;
  line-height: 11px;
}

.regions {
  width: 95px;
  height: 203px;
  margin-left: 1px;
  border-collapse: collapse;
  line-height: 11px;
}

.regions td, .regions th {
  padding: 0 2px;
  text-align: left;
  white-space: nowrap;
}

.regions th {
  color: #0c1118;
  background: linear-gradient(#dcdee4, #cdd4de);
}

.regions .sorted {
  width: 19px;
}

.regions td {
  background: #dfe9f5;
}

.regions td:first-child {
  background: #c3ebe9;
}

.regions .selected td {
  background: #fbd475;
  box-shadow: inset 0 1px #d6823a, inset 0 -1px #d6823a;
}

.regions .selected td:first-child {
  background: #fdeeb0;
  box-shadow: none;
  outline: 1px dashed #c43a28;
  outline-offset: -1px;
}

.dialog > footer {
  height: 17px;
  padding: 0 1px 0 12px;
  display: flex;
  align-items: center;
  justify-content: space-between;
}

.dialog > footer span {
  width: 190px;
  border-right: 1px solid #cdd3db;
}

.pointer {
  position: absolute;
  left: 479px;
  top: 516px;
  width: 8px;
  height: 12px;
}
```
